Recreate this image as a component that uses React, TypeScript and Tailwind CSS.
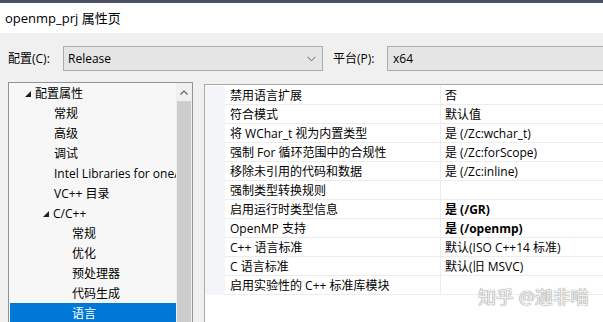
import React from "react";

const tree: { label: string; indent: number; expander?: boolean; selected?: boolean }[] = [
  { label: "配置属性", indent: 35, expander: true },
  { label: "常规", indent: 54 },
  { label: "高级", indent: 54 },
  { label: "调试", indent: 54 },
  { label: "Intel Libraries for oneAPI", indent: 54 },
  { label: "VC++ 目录", indent: 54 },
  { label: "C/C++", indent: 53, expander: true },
  { label: "常规", indent: 72 },
  { label: "优化", indent: 72 },
  { label: "预处理器", indent: 72 },
  { label: "代码生成", indent: 72 },
  { label: "语言", indent: 72, selected: true },
];

const props: { name: string; value: string; bold?: boolean }[] = [
  { name: "禁用语言扩展", value: "否" },
  { name: "符合模式", value: "默认值" },
  { name: "将 WChar_t 视为内置类型", value: "是 (/Zc:wchar_t)" },
  { name: "强制 For 循环范围中的合规性", value: "是 (/Zc:forScope)" },
  { name: "移除未引用的代码和数据", value: "是 (/Zc:inline)" },
  { name: "强制类型转换规则", value: "" },
  { name: "启用运行时类型信息", value: "是 (/GR)", bold: true },
  { name: "OpenMP 支持", value: "是 (/openmp)", bold: true },
  { name: "C++ 语言标准", value: "默认(ISO C++14 标准)" },
  { name: "C 语言标准", value: "默认(旧 MSVC)" },
  { name: "启用实验性的 C++ 标准库模块", value: "" },
];

function Chevron() {
  return (
    <svg width="9" height="6" viewBox="0 0 9 6" className="shrink-0">
      <path d="M0.5 0.8 L4.5 4.8 L8.5 0.8" fill="none" stroke="#606060" strokeWidth="1" />
    </svg>
  );
}

function Triangle({ x }: { x: number }) {
  return (
    <svg width="6" height="6" viewBox="0 0 6 6" className="absolute top-[8px]" style={{ left: x }}>
      <polygon points="6,0 6,6 0,6" fill="#1e1e1e" />
    </svg>
  );
}

export default function App() {
  return (
    <div className="relative w-[603px] h-[322px] overflow-hidden bg-[#f0f0f0] text-[12px] text-black font-['Open_Sans','Noto_Sans_CJK_SC',sans-serif] leading-none">
      <div className="h-[3px] bg-[#4b5168]" />
      <div className="h-[30px] bg-white flex items-center pl-[5px] text-[13px]">openmp_prj 属性页</div>

      <div className="flex items-center mt-[13px] h-[25px]">
        <div className="w-[63px] pl-[8px] whitespace-nowrap">配置(C):</div>
        <div className="w-[260px] h-[25px] bg-[#e5e5e5] border border-[#adadad] flex items-center pl-[4px] pr-[6px]">
          <span className="flex-1">Release</span>
          <Chevron />
        </div>
        <div className="w-[64px] pl-[10px] whitespace-nowrap">平台(P):</div>
        <div className="flex-1 h-[25px] bg-[#e5e5e5] border border-[#adadad] border-r-0 flex items-center pl-[5px]">x64</div>
      </div>

      <div className="flex mt-[11px] pl-[8px] h-[300px]">
        <div className="w-[185px] border border-[#8f949c] bg-[#f7f7f7] flex">
          <div className="flex-1 pl-[1px] overflow-hidden">
            {tree.map((t, i) => (
              <div
                key={i}
                className={`relative h-[20px] flex items-center whitespace-nowrap pt-[1px] ${t.selected ? "bg-[#0078d7] text-white" : ""}`}
              >
                {t.expander && <Triangle x={t.indent - 20} />}
                <span className="absolute" style={{ left: t.indent - 10 }}>{t.label}</span>
              </div>
            ))}
          </div>
          <div className="w-[16px] bg-[#f0f0f0] flex flex-col items-center">
            <div className="h-[18px] flex items-center justify-center">
              <svg width="8" height="5" viewBox="0 0 8 5">
                <path d="M0.5 4.5 L4 1 L7.5 4.5" fill="none" stroke="#606060" strokeWidth="1.2" />
              </svg>
            </div>
            <div className="w-[14px] flex-1 bg-[#cdcdcd]" />
          </div>
        </div>

        <div className="ml-[11px] mt-[2px] pt-[1px] flex-1 border-l border-t border-[#a9a9a9] bg-white">
          {props.map((p, i) => (
            <div key={i} className="flex h-[19px]">
              <div className="w-[20px] bg-[#f3f5f9]" />
              <div className="w-[215px] border-b border-[#ececec] pl-[5px] pt-[2px] flex items-center whitespace-nowrap overflow-hidden">
                {p.name}
              </div>
              <div
                className={`flex-1 border-b border-l border-[#ececec] pl-[4px] pt-[2px] flex items-center whitespace-nowrap ${p.bold ? "font-bold" : ""}`}
              >
                {p.value}
              </div>
            </div>
          ))}
        </div>
      </div>

      <div className="absolute left-[478px] top-[288px] text-[18px] text-[#f2f2f2] [text-shadow:0_0_1px_#8a8a8a,0_0_1px_#8a8a8a] whitespace-nowrap">
        知乎 @迦非喵
      </div>
    </div>
  );
}
